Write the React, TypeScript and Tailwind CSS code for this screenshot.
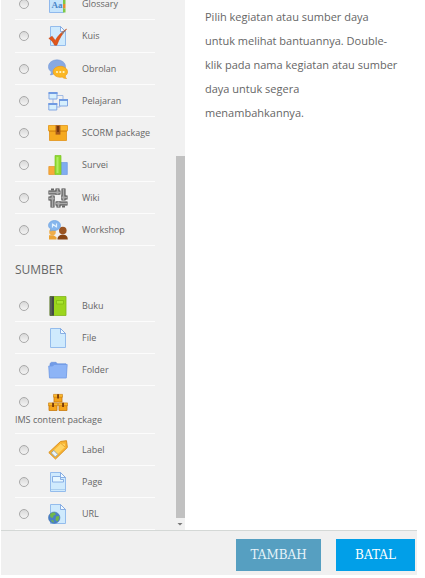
import React from "react";

type Item = { id: string; label: string; icon: React.ReactNode };

function Icon({ children }: { children: React.ReactNode }) {
  return (
    <svg viewBox="0 0 20 20" className="size-5 shrink-0" aria-hidden="true">
      {children}
    </svg>
  );
}

function Sheet() {
  return (
    <>
      <path d="M2.5 .5h10l5 5v14h-15z" fill="#cfeafd" stroke="#94bcec" />
      <path d="M12.5 .5v5h5z" fill="#f1faff" stroke="#7fa6e0" strokeWidth=".9" />
    </>
  );
}

function Crate({ x, y }: { x: number; y: number }) {
  return (
    <g transform={`translate(${x} ${y})`}>
      <path d="M.5 2.5h8v5.5h-8z" fill="#f4a41c" stroke="#c8780d" strokeWidth=".8" />
      <path d="M0 .4h9v2.8H0z" fill="#fbb92c" stroke="#c8780d" strokeWidth=".6" />
      <path d="M3.6 .3h1.9v4.2H3.6z" fill="#7b3d0c" />
    </g>
  );
}

const activities: Item[] = [
  {
    id: "glossary",
    label: "Glossary",
    icon: (
      <Icon>
        <path d="M1.5 .5h14v18h-14z" fill="#c5e4fc" stroke="#8fb8ec" />
        <path d="M15 1h2.5v4.5H15z" fill="#7ec843" />
        <path d="M15 5.5h2.5v4.5H15z" fill="#7ec843" />
        <path d="M15 10h2.5v4.500H15z" fill="#e5902f" />
        <path d="M15 14.500h2.5v4H15z" fill="#7fc944" />
        <text x="3.4" y="14" fontSize="9" fontFamily="Liberation Serif, serif" fontWeight="bold" fill="#4a86c8">Aa</text>
      </Icon>
    ),
  },
  {
    id: "kuis",
    label: "Kuis",
    icon: (
      <Icon>
        <Sheet />
        <path d="M.8 12.4l3.3-2.2 3.2 4.2C10 9.700 13.500 6 18.600 3c-4 4.500-7.400 9.500-9.800 16.200H6.600C5.400 16.400 3.500 14 .8 12.400z" fill="#e0561b" stroke="#c04110" strokeWidth=".5" />
        <path d="M13.500 7.200c1.600-1.700 3.200-3 5.100-4.200-1.500 1.600-2.700 3.200-3.700 4.900z" fill="#858585" />
      </Icon>
    ),
  },
  {
    id: "obrolan",
    label: "Obrolan",
    icon: (
      <Icon>
        <path d="M9 .8c4.800 0 8.600 3.100 8.600 7s-3.800 7-8.600 7c-1 0-2 0-2.900-.4-1 1-2.300 1.500-3.900 1.500.8-.9 1.200-2 1.100-3.100C1.400 11.500 .4 9.800 .4 7.800c0-3.900 3.800-7 8.600-7z" fill="#87a9e3" stroke="#7299d8" strokeWidth=".5" />
        <path d="M12.300 7.300c4 0 7.200 2.400 7.200 5.500 0 1.700-.9 3.100-2.300 4.100 0 1.100.5 1.900 1.300 2.600-1.800 0-3.200-.4-4.200-1.400-4.800.8-9.200-1.600-9.200-5.300 0-3.100 3.200-5.500 7.200-5.500z" fill="#fbb724" stroke="#ee9b14" strokeWidth=".7" />
        <g fill="#fff4c5">
          <circle cx="9" cy="13" r="1.100" />
          <circle cx="12.300" cy="13" r="1.100" />
          <circle cx="15.600" cy="13" r="1.100" />
        </g>
      </Icon>
    ),
  },
  {
    id: "pelajaran",
    label: "Pelajaran",
    icon: (
      <Icon>
        <path d="M9 4.500h6v4M5 7.500v5M9 16h3v-4" fill="none" stroke="#9bb5e2" strokeWidth=".9" />
        <g fill="#d6effd" stroke="#83a7e3">
          <path d="M1 1.500h8V8H1zM.8 12.500h8V19h-8zM11.500 8.500h8V15h-8z" />
        </g>
        <path d="M.6 1h8.900v2H.6zM.4 12h8.900v2H.4zM11 8h9v2h-9z" fill="#719be2" />
      </Icon>
    ),
  },
  {
    id: "scorm",
    label: "SCORM package",
    icon: (
      <Icon>
        <path d="M1.500 7h17v10.500h-17z" fill="#f5a91f" stroke="#e29316" strokeWidth=".8" />
        <path d="M.5 2.500h19v5.300H.5z" fill="#fbb82e" stroke="#e29316" strokeWidth=".8" />
        <path d="M1 8.300h18" stroke="#d28410" strokeWidth=".8" />
        <path d="M7.600 2.300h4.800v9.300H7.600z" fill="#a5581c" />
        <path d="M9 3h2v6H9z" fill="#74380d" />
      </Icon>
    ),
  },
  {
    id: "survei",
    label: "Survei",
    icon: (
      <Icon>
        <path d="M.8 11.500h6v8h-6z" fill="#f8aa39" stroke="#e5942a" strokeWidth=".7" />
        <path d="M13 7.500h6.300v12H13z" fill="#80adf0" stroke="#6d9ae2" strokeWidth=".7" />
        <path d="M7 .5h6v19H7z" fill="#8fd92e" stroke="#7dc626" strokeWidth=".7" />
        <path d="M8.500 2h2v16h-2z" fill="#b0ec63" />
      </Icon>
    ),
  },
  {
    id: "wiki",
    label: "Wiki",
    icon: (
      <Icon>
        <g fill="none" stroke="#454545" strokeWidth="4">
          <path d="M.5 4.500h12M7.500 15.500h12M.5 10.500h6M13.500 9.500h6" />
          <path d="M4.500 7.500v12M15.500 .5v12M9.500 .5v6M10.500 13.500v6" />
        </g>
        <g fill="none" stroke="#a9a9a9" strokeWidth="2">
          <path d="M1 4.500h11.500M7.500 15.500H19M1 10.500h5.500M13.500 9.500H19" />
          <path d="M4.500 7.500V19M15.500 1v11.500M9.500 1v5.500M10.500 13.500V19" />
        </g>
        <path d="M4.500 .5v2M15.500 17.500v2" stroke="#666" strokeWidth="3" />
      </Icon>
    ),
  },
  {
    id: "workshop",
    label: "Workshop",
    icon: (
      <Icon>
        <circle cx="4.500" cy="12" r="3.300" fill="#efae4b" />
        <path d="M1 19.500v-4.200h4.500l3 2v2.200z" fill="#eba335" />
        <circle cx="14.800" cy="10.600" r="3.800" fill="#9a5422" />
        <path d="M9.500 19.500c0-3.500 2-4 3.800-4.800h3c2 .8 3.500 1.500 3.500 4.800z" fill="#874515" />
        <path d="M6.500 .5c3.400 0 6 2.200 6 5s-2.600 5-6 5c-.6 0-1.200 0-1.700-.2L2.500 11l.3-2C1.400 8.200 .5 6.900 .5 5.500c0-2.800 2.600-5 6-5z" fill="#86b6ed" stroke="#679de0" strokeWidth=".6" />
        <path d="M4.500 3.500v4M8.500 3.500v4M4.500 4l4 3" fill="none" stroke="#e2f2ff" strokeWidth="1.200" />
      </Icon>
    ),
  },
];

const resources: Item[] = [
  {
    id: "buku",
    label: "Buku",
    icon: (
      <Icon>
        <path d="M2 .5h16v19H2z" fill="#9bd51c" stroke="#83b51d" strokeWidth=".8" />
        <path d="M1.700 .3h4.300v19.400H1.700z" fill="#454b45" />
        <path d="M3 1v18" stroke="#777d77" strokeWidth=".8" />
        <path d="M8.500 4.500h7V8h-7z" fill="#a9e52f" stroke="#80b914" strokeWidth=".8" />
      </Icon>
    ),
  },
  { id: "file", label: "File", icon: <Icon><Sheet /></Icon> },
  {
    id: "folder",
    label: "Folder",
    icon: (
      <Icon>
        <path d="M2 17V3.500L3.500 2.300H8l1.500 1.500H18v12z" fill="#719be7" stroke="#638ddb" strokeWidth=".6" />
        <path d="M.7 6h4l1.500-1.500h13L18.300 18H1.500z" fill="#8db4f6" stroke="#719be5" strokeWidth=".8" />
      </Icon>
    ),
  },
  {
    id: "ims",
    label: "IMS content package",
    icon: (
      <Icon>
        <Crate x={5.5} y={2} />
        <Crate x={0.5} y={10.5} />
        <Crate x={10.5} y={10.5} />
      </Icon>
    ),
  },
  {
    id: "label",
    label: "Label",
    icon: (
      <Icon>
        <path d="M12.500 1.500L18.500 .7 19.300 7.500 7.500 19 .8 12.500z" fill="#f8b332" stroke="#d9901e" />
        <path d="M13 3.500l4 .2-.2 3.600-8 7.800-4-3.900z" fill="#ffd362" />
        <path d="M3.300 12.900l2.500-2.500 4 4-2.500 2.500z" fill="#eaf3fb" stroke="#7e99ac" strokeWidth=".8" />
        <path d="M13 3.500l4 3.500" stroke="#e19c25" strokeWidth=".8" />
      </Icon>
    ),
  },
  {
    id: "page",
    label: "Page",
    icon: (
      <Icon>
        <Sheet />
        <path d="M4.500 4.500h8v3h3v2.500h-11z" fill="#e7f7ff" stroke="#7fa8e2" strokeWidth=".9" />
        <path d="M3 17.500h14" stroke="#a9ceef" />
      </Icon>
    ),
  },
  {
    id: "url",
    label: "URL",
    icon: (
      <Icon>
        <Sheet />
        <circle cx="6.200" cy="13.700" r="5.700" fill="#4a7fc6" stroke="#4273b4" strokeWidth=".6" />
        <path d="M2 10.500c1.400-1.700 3.300-2.300 5-1.800l.8 1.800-2.300 1.200-.5 2.300-2.600-.8zM8 12.500l3-.5c.5 2-.2 4-1.700 5.400L7.500 16zM3 16l2.500.5.300 2.200C4.500 18.300 3.500 17.400 3 16z" fill="#70b84a" />
      </Icon>
    ),
  },
];

function Row({ item }: { item: Item }) {
  return (
    <li className="min-h-8 border-b border-[#fcfcfc]">
      <label htmlFor={item.id} className="flex flex-wrap items-center pt-1.5 pb-[5px]">
        <input
          id={item.id}
          type="radio"
          name="module"
          className="ml-1 size-2.5 appearance-none rounded-full border border-[#a9a9a9] bg-linear-to-b from-[#d9d9d9] to-[#f4f4f4]"
        />
        <span className="mr-3.5 ml-[19px] block">{item.icon}</span>
        <span className="text-[9px] leading-4 whitespace-nowrap">{item.label}</span>
      </label>
    </li>
  );
}

export default function App() {
  return (
    <div className="flex h-screen flex-col bg-white pb-[3px] font-['Open_Sans','Noto_Sans',sans-serif] text-[#666]">
      <main className="flex min-h-0 flex-1">
        <section className="ml-px flex w-[184px] shrink-0 bg-[#f1f1f1]">
          <div className="flex min-w-0 flex-1 flex-col justify-end overflow-hidden pr-5 pl-3.5">
            <ul className="grid min-h-[258px] shrink-0 auto-rows-fr">
              {activities.map((item) => <Row key={item.id} item={item} />)}
            </ul>
            <h2 className="pt-3 pb-2 text-xs leading-6">SUMBER</h2>
            <ul className="shrink-0">
              {resources.map((item) => <Row key={item.id} item={item} />)}
            </ul>
          </div>
          <div className="flex w-2.5 flex-col items-center pt-[156px]" aria-hidden="true">
            <div className="w-[9px] flex-1 bg-[#c1c1c1]" />
            <svg viewBox="0 0 10 12" className="h-3 w-2.5">
              <path d="M2.500 5h5L5 7.500z" fill="#777" />
            </svg>
          </div>
        </section>
        <p className="flex-1 pt-[5px] pr-6 pl-5 text-[11px] leading-6">
          Pilih kegiatan atau sumber daya
          <br />
          untuk melihat bantuannya. Double-
          <br />
          klik pada nama kegiatan atau sumber
          <br />
          daya untuk segera
          <br />
          menambahkannya.
        </p>
      </main>
      <footer className="mr-2 ml-px flex h-[45px] shrink-0 items-center justify-end gap-[15px] border-t border-[#d4d8d6] bg-[#f0f0f0] pt-1 pr-0.5 font-['DejaVu_Serif',serif] text-xs text-white">
        <button type="button" className="h-8 w-[85px] bg-[#569fc1] text-[#e6f4fa]">TAMBAH</button>
        <button type="button" className="h-8 w-[79px] bg-[#019fe8]">BATAL</button>
      </footer>
      
    </div>
  );
}
